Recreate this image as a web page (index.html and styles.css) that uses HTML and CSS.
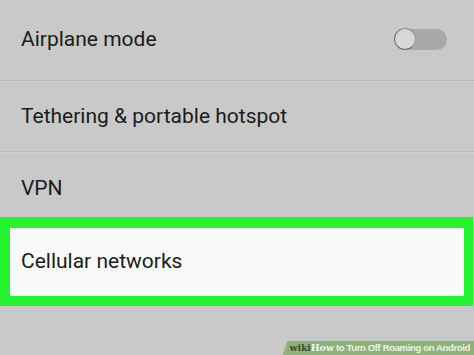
FILE: index.html
```html
<!DOCTYPE html>
<html>
<head>
<meta charset="utf-8">
<link rel="stylesheet" href="styles.css">
</head>
<body>
<div class="screen">
  <div class="row row-air">
    <span class="label">Airplane mode</span>
    <span class="toggle"><span class="knob"></span></span>
  </div>
  <div class="divider"></div>
  <div class="row row-teth">
    <span class="label">Tethering &amp; portable hotspot</span>
  </div>
  <div class="divider"></div>
  <div class="row row-vpn">
    <span class="label">VPN</span>
  </div>
  <div class="highlight">
    <div class="row row-cell">
      <span class="label">Cellular networks</span>
    </div>
  </div>
  <div class="wm"><span class="wm-wiki">wiki</span><span class="wm-how">How</span><span class="wm-rest"> to Turn Off Roaming on Android</span></div>
</div>
</body>
</html>
```
FILE: styles.css
```css
html, body {
  margin: 0;
  padding: 0;
}
body {
  width: 474px;
  height: 355px;
  overflow: hidden;
  background: #c9c9c9;
  font-family: Roboto, "Noto Sans", sans-serif;
}
.screen {
  position: relative;
  width: 474px;
  height: 355px;
  display: flex;
  flex-direction: column;
}
.row {
  display: flex;
  align-items: center;
  justify-content: space-between;
  box-sizing: border-box;
  padding-left: 21px;
}
.label {
  font-size: 21px;
  line-height: 24px;
  color: #1b1b1b;
}
.row-air {
  height: 80px;
  padding-right: 27px;
  padding-bottom: 2px;
}
.row-teth {
  height: 70px;
}
.row-vpn {
  height: 65px;
  padding-top: 7px;
}
.divider {
  height: 1px;
  background: #bababa;
  box-shadow: 0 1px 0 #d0d0d0;
}
.highlight {
  height: 89px;
  width: 473px;
  box-sizing: border-box;
  border: 10px solid #23f42f;
  border-right-width: 9px;
  border-top-width: 11px;
  background: #f9f9f9;
}
.row-cell {
  height: 68px;
  padding-left: 11px;
  padding-bottom: 2px;
}
.toggle {
  position: relative;
  width: 52px;
  height: 21px;
  border-radius: 11px;
  background: #a9a9a9;
}
.knob {
  position: absolute;
  left: -1px;
  top: -1px;
  width: 20px;
  height: 20px;
  border-radius: 50%;
  background: #d7d7d7;
  border: 1.5px solid #6f6f6f;
  border-right-color: #9a9a9a;
  border-top-color: #8a8a8a;
}
.wm {
  position: absolute;
  right: 0;
  bottom: 0;
  height: 14px;
  padding: 0 4px 0 7px;
  background: #8fb27c;
  clip-path: polygon(5px 0, 100% 0, 100% 100%, 0 100%);
  display: flex;
  align-items: center;
  white-space: nowrap;
  line-height: 14px;
}
.wm-wiki {
  font-family: "DejaVu Serif", "Liberation Serif", serif;
  font-weight: bold;
  color: #3f4a36;
  font-size: 9.5px;
  letter-spacing: -0.2px;
}
.wm-how {
  font-family: "DejaVu Serif", "Liberation Serif", serif;
  font-weight: bold;
  color: #f2f5ee;
  font-size: 9.5px;
  letter-spacing: -0.2px;
}
.wm-rest {
  font-family: "Liberation Sans", Arial, sans-serif;
  font-weight: bold;
  color: #eef3ea;
  font-size: 9.5px;
  letter-spacing: -0.35px;
  white-space: pre;
}
```
